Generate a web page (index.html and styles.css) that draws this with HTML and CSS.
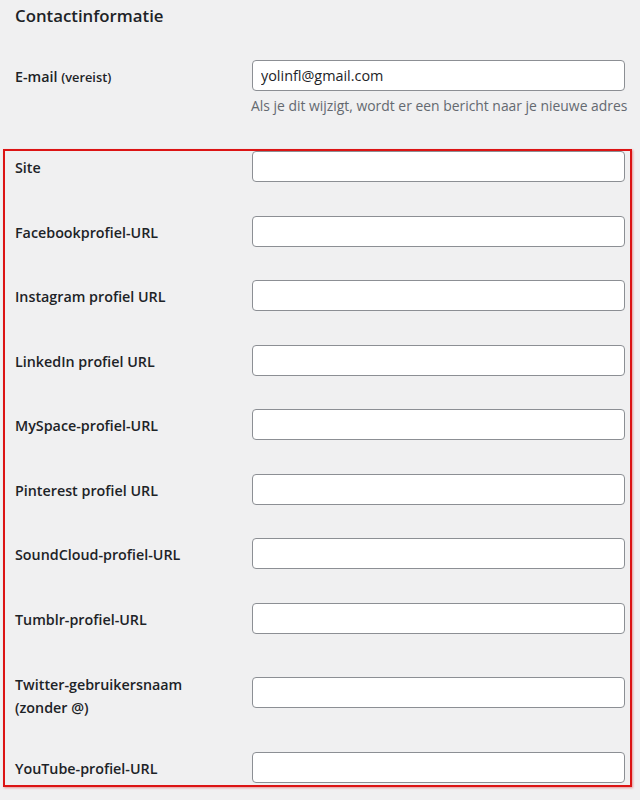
FILE: index.html
```html
<!DOCTYPE html>
<html lang="nl">
<head>
<meta charset="utf-8">
<title>Contactinformatie</title>
<link rel="stylesheet" href="styles.css">
</head>
<body>
<div class="page">
  <h2 class="title">Contactinformatie</h2>
  <div class="row email-row">
    <label class="label" for="email">E-mail <span class="req">(vereist)</span></label>
    <div class="field"><input class="input" id="email" type="text" value="yolinfl@gmail.com"></div>
  </div>
  <p class="desc">Als je dit wijzigt, wordt er een bericht naar je nieuwe adres</p>
  <div class="rows">
    <div class="row"><label class="label">Site</label><div class="field"><input class="input" type="text"></div></div>
    <div class="row"><label class="label">Facebookprofiel-URL</label><div class="field"><input class="input" type="text"></div></div>
    <div class="row"><label class="label">Instagram profiel URL</label><div class="field"><input class="input" type="text"></div></div>
    <div class="row"><label class="label">LinkedIn profiel URL</label><div class="field"><input class="input" type="text"></div></div>
    <div class="row"><label class="label">MySpace-profiel-URL</label><div class="field"><input class="input" type="text"></div></div>
    <div class="row"><label class="label">Pinterest profiel URL</label><div class="field"><input class="input" type="text"></div></div>
    <div class="row"><label class="label">SoundCloud-profiel-URL</label><div class="field"><input class="input" type="text"></div></div>
    <div class="row"><label class="label">Tumblr-profiel-URL</label><div class="field"><input class="input" type="text"></div></div>
    <div class="row row-tall"><label class="label label-two">Twitter-gebruikersnaam<br>(zonder @)</label><div class="field"><input class="input" type="text"></div></div>
    <div class="row"><label class="label">YouTube-profiel-URL</label><div class="field"><input class="input" type="text"></div></div>
  </div>
  <div class="highlight"></div>
</div>
</body>
</html>
```
FILE: styles.css
```css
html, body {
  margin: 0;
  padding: 0;
  background: #f0f0f1;
  overflow: hidden;
}
.page {
  position: relative;
  width: 640px;
  height: 800px;
  padding-left: 15px;
  box-sizing: border-box;
  font-family: "Open Sans", "Noto Sans", sans-serif;
  color: #1d2327;
}
.title {
  margin: 0;
  padding-top: 4px;
  font-size: 16.8px;
  line-height: 24px;
  font-weight: 600;
}
.row {
  display: flex;
  align-items: center;
  height: 64.5px;
}
.email-row {
  height: 31px;
  margin-top: 32px;
}
.label {
  width: 237px;
  flex: none;
  font-size: 14.3px;
  font-weight: 600;
  line-height: 20px;
  padding-top: 3px;
  box-sizing: border-box;
}
.req {
  font-size: 12.8px;
}
.label-two {
  line-height: 23px;
  padding-top: 6px;
}
.row-tall {
  height: 84.5px;
}
.field {
  flex: none;
  width: 373px;
}
.input {
  display: block;
  box-sizing: border-box;
  width: 373px;
  height: 31px;
  margin: 0;
  padding: 0 8px;
  border: 1px solid #8c8f94;
  border-radius: 4px;
  background: #fff;
  font-family: "Open Sans", "Noto Sans", sans-serif;
  font-size: 14.4px;
  color: #1d2327;
}
.desc {
  margin: 5px 0 0 236px;
  font-size: 13.9px;
  line-height: 20px;
  color: #646970;
  white-space: nowrap;
}
.rows {
  margin-top: 18.25px;
}
.highlight {
  position: absolute;
  left: 3px;
  top: 149px;
  width: 629px;
  height: 638px;
  box-sizing: border-box;
  border: 2px solid #dc1414;
  box-shadow: 1px 1px 2px rgba(220, 40, 40, 0.45);
  pointer-events: none;
}
```
